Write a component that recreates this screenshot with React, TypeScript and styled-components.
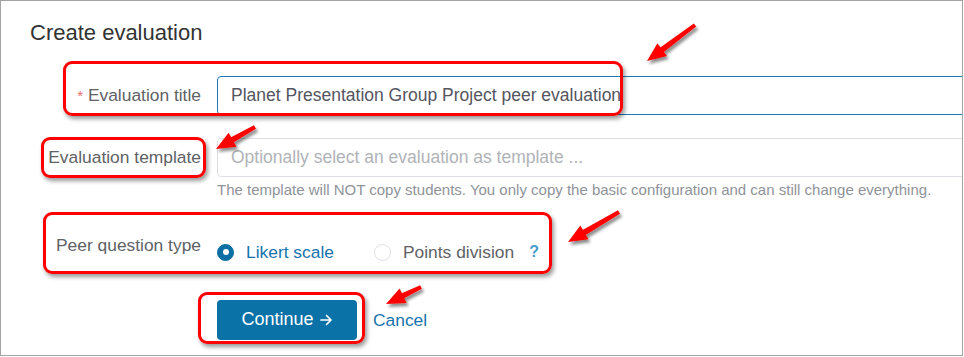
import React from "react";
import styled, { createGlobalStyle } from "styled-components";

const GlobalStyle = createGlobalStyle`
  html, body {
    margin: 0;
    padding: 0;
    background: #ffffff;
  }
  body {
    font-family: "Liberation Sans", Arial, sans-serif;
  }
`;

type Point = [number, number];

interface IArrow {
  tail: Point;
  tip: Point;
}

const arrows: IArrow[] = [
  { tail: [695, 25], tip: [647, 61] },
  { tail: [255, 127], tip: [216, 149] },
  { tail: [619, 212], tip: [568, 242] },
  { tail: [421, 287], tip: [386, 304] },
];

function Arrow({ tail, tip }: IArrow) {
  const dx = tip[0] - tail[0];
  const dy = tip[1] - tail[1];
  const len = Math.hypot(dx, dy);
  const ux = dx / len;
  const uy = dy / len;
  const nx = -uy;
  const ny = ux;
  const headLen = 17;
  const headW = 8;
  const bx = tip[0] - ux * headLen;
  const by = tip[1] - uy * headLen;
  const shaft = [
    [tail[0] + nx * 2, tail[1] + ny * 2],
    [bx + ux * 3 + nx * 3, by + uy * 3 + ny * 3],
    [bx + ux * 3 - nx * 3, by + uy * 3 - ny * 3],
    [tail[0] - nx * 2, tail[1] - ny * 2],
  ];
  const head = [
    [tip[0], tip[1]],
    [bx + nx * headW - ux * 2, by + ny * headW - uy * 2],
    [bx - nx * headW - ux * 2, by - ny * headW - uy * 2],
  ];
  const toPoints = (pts: number[][]) => pts.map((p) => p.join(",")).join(" ");
  return (
    <g filter="url(#arrowShadow)">
      <polygon points={toPoints(shaft)} fill="#ff0000" />
      <polygon points={toPoints(head)} fill="#ff0000" />
    </g>
  );
}

function App() {
  return (
    <>
      <GlobalStyle />
      <Frame>
        <Title>Create evaluation</Title>
        <Form>
          <Row>
            <Label>
              <Required>*</Required> Evaluation title
            </Label>
            <Field>
              <Input $active>Planet Presentation Group Project peer evaluation</Input>
            </Field>
          </Row>
          <Row $gap={0}>
            <Label>Evaluation template</Label>
            <Field>
              <Input>
                <Placeholder>Optionally select an evaluation as template ...</Placeholder>
              </Input>
              <Help>
                The template will NOT copy students. You only copy the basic configuration and can
                still change everything.
              </Help>
            </Field>
          </Row>
          <Row $top={33} $gap={0}>
            <Label $compact>Peer question type</Label>
            <RadioGroup>
              <RadioOption $checked>
                <RadioDot $checked />
                Likert scale
              </RadioOption>
              <RadioOption>
                <RadioDot />
                Points division
              </RadioOption>
              <Hint>?</Hint>
            </RadioGroup>
          </Row>
          <Actions>
            <PrimaryButton>
              Continue
              <svg width="13" height="12" viewBox="0 0 13 12" fill="none">
                <path
                  d="M1 6h10M6.5 1.5 11 6l-4.5 4.5"
                  stroke="#ffffff"
                  strokeWidth="1.7"
                  strokeLinecap="round"
                  strokeLinejoin="round"
                />
              </svg>
            </PrimaryButton>
            <LinkButton>Cancel</LinkButton>
          </Actions>
        </Form>

        <Overlay>
          <Highlight $left={63} $top={61} $width={560} $height={55} />
          <Highlight $left={41} $top={137} $width={165} $height={41} />
          <Highlight $left={43} $top={212} $width={509} $height={62} />
          <Highlight $left={198} $top={292} $width={167} $height={52} />
          <ArrowLayer width="963" height="356" viewBox="0 0 963 356">
            <defs>
              <filter id="arrowShadow" x="-30%" y="-30%" width="160%" height="160%">
                <feDropShadow dx="2" dy="3" stdDeviation="1.8" floodColor="#000" floodOpacity="0.45" />
              </filter>
            </defs>
            {arrows.map((a, i) => (
              <Arrow key={i} tail={a.tail} tip={a.tip} />
            ))}
          </ArrowLayer>
        </Overlay>
      </Frame>
    </>
  );
}

const Frame = styled.div`
  position: relative;
  box-sizing: border-box;
  width: 963px;
  height: 356px;
  border: 1px solid #a3a3a3;
  padding: 19px 0 0 29px;
  overflow: hidden;
  background: #ffffff;
`;

const Title = styled.h1`
  margin: 0 0 30px;
  font-size: 22px;
  line-height: 26px;
  font-weight: normal;
  color: #333333;
`;

const Form = styled.div`
  display: flex;
  flex-direction: column;
`;

const Row = styled.div<{ $gap?: number; $top?: number }>`
  display: grid;
  grid-template-columns: 171px 1fr;
  column-gap: 16px;
  align-items: start;
  margin-top: ${(p) => p.$top ?? 0}px;
  margin-bottom: ${(p) => p.$gap ?? 23}px;
`;

const Label = styled.div<{ $compact?: boolean }>`
  text-align: right;
  font-size: 17.4px;
  line-height: ${(p) => (p.$compact ? "26px" : "39px")};
  color: #606266;
  white-space: nowrap;
`;

const Required = styled.span`
  color: #f56c6c;
  font-size: 15px;
`;

const Field = styled.div`
  display: flex;
  flex-direction: column;
  margin-right: -10px;
`;

const Input = styled.div<{ $active?: boolean }>`
  box-sizing: border-box;
  height: 39px;
  padding: 0 13px;
  border: 1px solid ${(p) => (p.$active ? "#1b79b4" : "#dcdfe6")};
  border-radius: 4px;
  font-size: 17.5px;
  line-height: 37px;
  color: #55555f;
  white-space: nowrap;
`;

const Placeholder = styled.span`
  color: #b0b3b8;
`;

const Help = styled.div`
  margin-top: 4px;
  font-size: 15px;
  line-height: 18px;
  color: #909399;
  white-space: nowrap;
`;

const RadioGroup = styled.div`
  display: flex;
  align-items: center;
  padding-top: 7px;
  height: 26px;
`;

const RadioOption = styled.label<{ $checked?: boolean }>`
  display: flex;
  align-items: center;
  gap: 12px;
  margin-right: 40px;
  font-size: 17.4px;
  line-height: 26px;
  color: ${(p) => (p.$checked ? "#1773ad" : "#606266")};
  &:last-of-type {
    margin-right: 15px;
  }
`;

const RadioDot = styled.span<{ $checked?: boolean }>`
  box-sizing: border-box;
  width: 17px;
  height: 17px;
  border-radius: 50%;
  border: 1px solid ${(p) => (p.$checked ? "#0b6fa4" : "#dcdfe6")};
  background: ${(p) => (p.$checked ? "#0b6fa4" : "#ffffff")};
  display: flex;
  align-items: center;
  justify-content: center;
  &::after {
    content: "";
    width: 6px;
    height: 6px;
    border-radius: 50%;
    background: #ffffff;
    display: ${(p) => (p.$checked ? "block" : "none")};
  }
`;

const Hint = styled.span`
  font-size: 16px;
  font-weight: bold;
  color: #4a9cc9;
`;

const Actions = styled.div`
  display: flex;
  align-items: center;
  gap: 16px;
  margin-top: 35px;
  padding-left: 187px;
`;

const PrimaryButton = styled.button`
  box-sizing: border-box;
  width: 140px;
  height: 40px;
  display: flex;
  align-items: center;
  justify-content: center;
  gap: 6px;
  border: none;
  border-radius: 4px;
  background: #0a72a7;
  color: #ffffff;
  font-family: inherit;
  font-size: 18px;
  padding: 0 0 1px;
`;

const LinkButton = styled.a`
  font-size: 17.4px;
  color: #1773ad;
  text-decoration: none;
`;

const Overlay = styled.div`
  position: absolute;
  top: -1px;
  left: -1px;
  width: 963px;
  height: 356px;
  pointer-events: none;
`;

const Highlight = styled.div<{ $left: number; $top: number; $width: number; $height: number }>`
  position: absolute;
  box-sizing: border-box;
  left: ${(p) => p.$left}px;
  top: ${(p) => p.$top}px;
  width: ${(p) => p.$width}px;
  height: ${(p) => p.$height}px;
  border: 3px solid #ff0000;
  border-radius: 9px;
  box-shadow: 2px 3px 4px rgba(0, 0, 0, 0.4);
`;

const ArrowLayer = styled.svg`
  position: absolute;
  top: 0;
  left: 0;
`;

export default App;
